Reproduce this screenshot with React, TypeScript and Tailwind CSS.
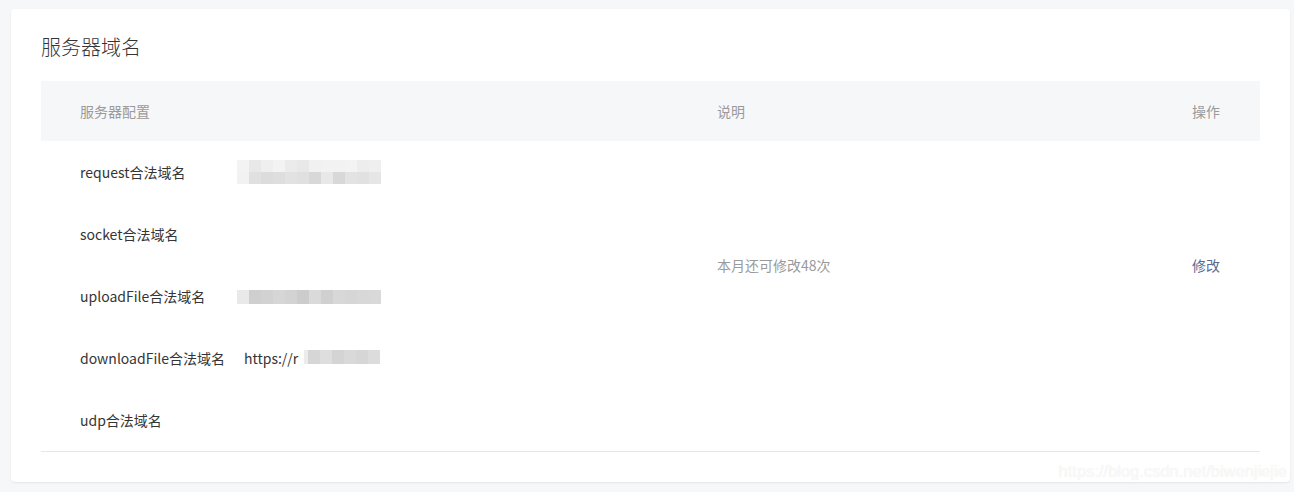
const REQ_TOP = ['bg-[#f3f3f3]', 'bg-[#e8e8e8]', 'bg-[#efefef]', 'bg-[#f3f3f3]', 'bg-[#ebebeb]', 'bg-[#e8e8e8]', 'bg-[#f1f1f1]', 'bg-[#f2f2f2]', 'bg-[#f2f2f2]', 'bg-[#f3f3f3]', 'bg-[#ededed]', 'bg-[#efefef]'];
const REQ_BOTTOM = ['bg-[#f2f2f2]', 'bg-[#e0e0e0]', 'bg-[#dcdcdc]', 'bg-[#dedede]', 'bg-[#e2e2e2]', 'bg-[#e0e0e0]', 'bg-[#d8d8d8]', 'bg-[#e8e8e8]', 'bg-[#d8d8d8]', 'bg-[#e3e3e3]', 'bg-[#e1e1e1]', 'bg-[#e6e6e6]'];
const UPLOAD = ['bg-[#e9e9e9]', 'bg-[#cfcfcf]', 'bg-[#d2d2d2]', 'bg-[#d6d6d6]', 'bg-[#d3d3d3]', 'bg-[#cccccc]', 'bg-[#dadada]', 'bg-[#d0d0d0]', 'bg-[#d8d8d8]', 'bg-[#d6d6d6]', 'bg-[#d8d8d8]', 'bg-[#d9d9d9]'];
const DOWNLOAD = ['bg-[#d6d6d6]', 'bg-[#dedede]', 'bg-[#d4d4d4]', 'bg-[#d9d9d9]', 'bg-[#d6d6d6]', 'bg-[#dcdcdc]'];

function Mosaic({ rows, height }: { rows: string[][]; height: string }) {
  return (
    <div className="flex flex-col">
      {rows.map((row, i) => (
        <div key={i} className={`flex ${height}`}>
          {row.map((c, j) => (
            <div key={j} className={`w-[12px] ${c}`} />
          ))}
        </div>
      ))}
    </div>
  );
}

const ROWS = [
  { label: 'request合法域名', value: <div className="ml-[51px]"><Mosaic rows={[REQ_TOP, REQ_BOTTOM]} height="h-[12px]" /></div> },
  { label: 'socket合法域名', value: null },
  { label: 'uploadFile合法域名', value: <div className="ml-[32px] mt-[2px]"><Mosaic rows={[UPLOAD]} height="h-[14px]" /></div> },
  {
    label: 'downloadFile合法域名',
    value: (
      <div className="ml-[19px] flex items-center">
        <span>https://r</span>
        <div className="ml-[6px] mt-[-2px] flex">
          <div className="w-[4px] h-[14px] bg-[#ececec]" />
          <Mosaic rows={[DOWNLOAD]} height="h-[14px]" />
        </div>
      </div>
    ),
  },
  { label: 'udp合法域名', value: null },
];

export default function App() {
  return (
    <div
      className="relative w-[1294px] h-[492px] bg-[#f6f7f9] pt-[9px] pl-[11px] pr-[4px] overflow-hidden"
      style={{ fontFamily: '"Noto Sans CJK SC", "Liberation Sans", sans-serif' }}
    >
      <div className="w-[1279px] h-[473px] bg-white rounded-[4px] shadow-[0_1px_2px_rgba(0,0,0,0.08)] px-[30px]">
        <h2 className="pt-[25px] h-[72px] text-[20px] leading-[26px] font-light text-[#353535]">服务器域名</h2>

        <div className="flex h-[60px] items-center bg-[#f6f7f9] text-[14px] text-[#9a9a9a]">
          <div className="w-[676px] pl-[39px]">服务器配置</div>
          <div className="flex-1">说明</div>
          <div className="pr-[40px]">操作</div>
        </div>

        <div className="flex border-b border-[#e7e7eb] text-[14px]">
          <div className="w-[676px] pl-[39px] text-[#353535]">
            {ROWS.map((r) => (
              <div key={r.label} className="flex h-[62px] items-center">
                <span>{r.label}</span>
                {r.value}
              </div>
            ))}
          </div>
          <div className="flex-1 flex items-center pb-[62px] text-[#9a9a9a]">本月还可修改48次</div>
          <div className="flex items-center pb-[62px] pr-[40px] text-[#576b95]">
            <a href="#">修改</a>
          </div>
        </div>
      </div>

      <div
        className="absolute right-[7px] bottom-[8px] text-[16.5px] text-white/80"
        style={{ fontFamily: '"Liberation Sans", sans-serif', textShadow: '0 0 1px rgba(0,0,0,0.12)' }}
      >
        https://blog.csdn.net/biwenjiejie
      </div>
    </div>
  );
}
